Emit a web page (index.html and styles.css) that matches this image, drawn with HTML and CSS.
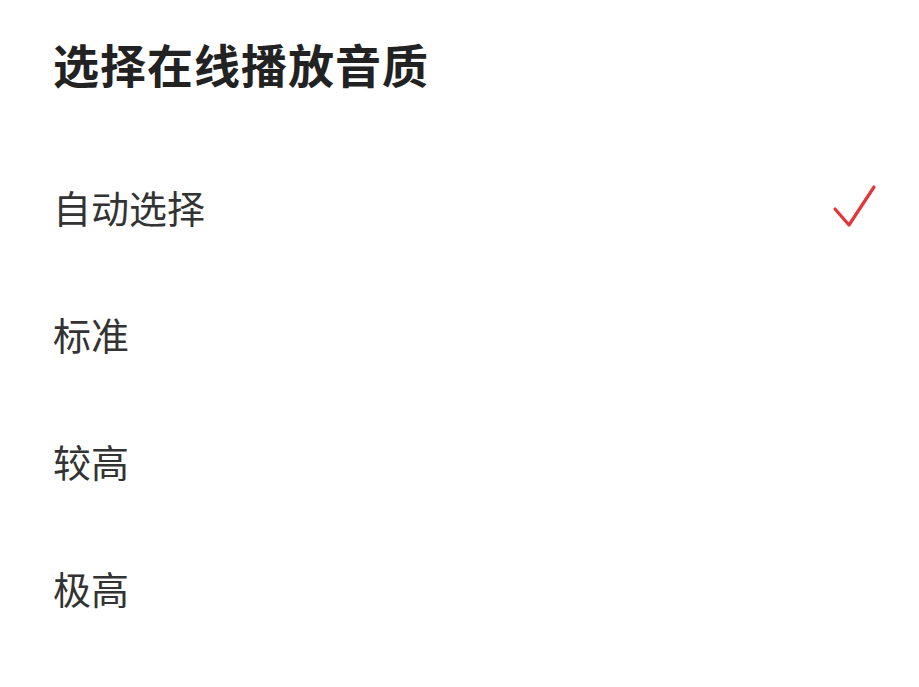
FILE: index.html
```html
<!DOCTYPE html>
<html lang="zh-CN">
<head>
<meta charset="utf-8">
<title>选择在线播放音质</title>
<link rel="stylesheet" href="styles.css">
</head>
<body>
<div class="sheet">
  <h1 class="title">选择在线播放音质</h1>
  <ul class="options">
    <li class="option selected">
      <span class="label">自动选择</span>
      <svg class="check" viewBox="0 0 46 46" width="46" height="46" aria-hidden="true">
        <path d="M4 25 L18 41 L43 3" fill="none" stroke="#e2363c" stroke-width="3.2" stroke-linecap="round" stroke-linejoin="round"/>
      </svg>
    </li>
    <li class="option"><span class="label">标准</span></li>
    <li class="option"><span class="label">较高</span></li>
    <li class="option"><span class="label">极高</span></li>
  </ul>
</div>
</body>
</html>
```
FILE: styles.css
```css
html, body {
  margin: 0;
  padding: 0;
  background: #ffffff;
}
body {
  font-family: "Noto Sans CJK SC", "Noto Sans", sans-serif;
  width: 919px;
  height: 687px;
  overflow: hidden;
}
.sheet {
  padding: 41px 42px 0 53px;
}
.title {
  margin: 0;
  font-size: 46px;
  line-height: 44px;
  height: 44px;
  font-weight: 700;
  color: #222222;
  letter-spacing: 1px;
}
.options {
  list-style: none;
  margin: 58px 0 0 0;
  padding: 0;
}
.option {
  height: 127px;
  display: flex;
  align-items: center;
  justify-content: space-between;
}
.label {
  font-size: 38px;
  line-height: 38px;
  color: #333333;
}
.check {
  display: block;
}
```
